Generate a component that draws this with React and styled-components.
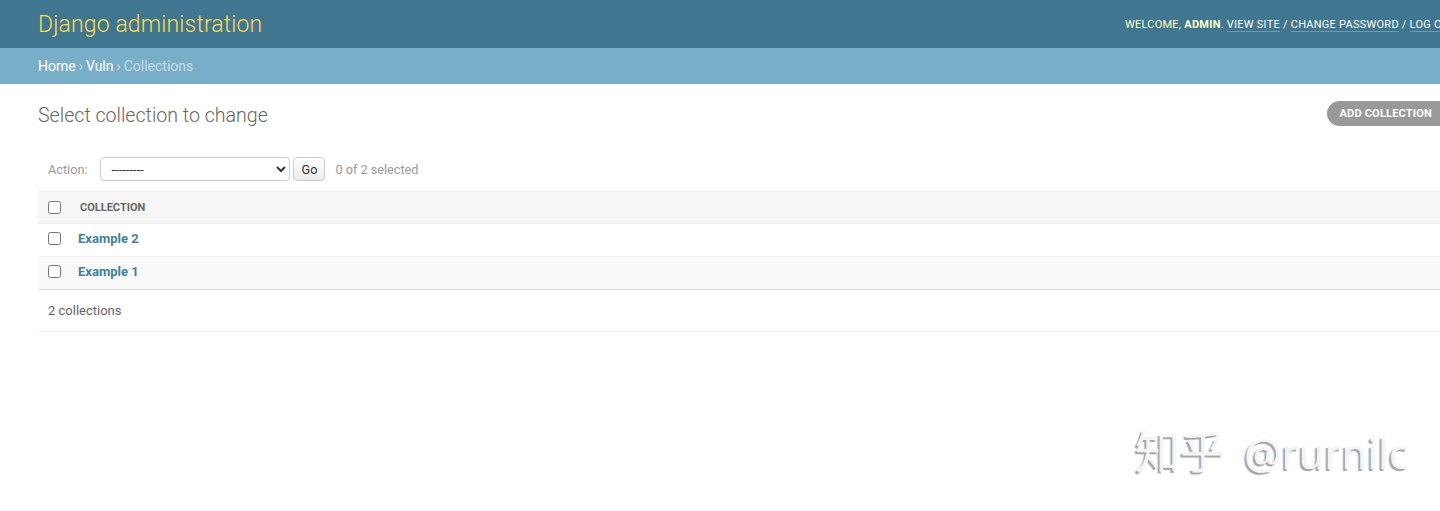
import React from "react";
import styled, { createGlobalStyle } from "styled-components";

const GlobalStyle = createGlobalStyle`
  html, body {
    margin: 0;
    padding: 0;
    background: #fff;
    overflow: hidden;
  }
  body {
    font-family: Roboto, "Lucida Grande", "DejaVu Sans", Verdana, sans-serif;
    color: #333;
    font-size: 14px;
  }
`;

// the screenshot is a crop of a wider window, so the page runs past the right edge
const Page = styled.div`
  position: relative;
  width: 1496px;
  min-height: 511px;
`;

const Header = styled.header`
  display: flex;
  align-items: center;
  justify-content: space-between;
  height: 48px;
  padding: 0 40px 0 38px;
  background: #417690;
  color: #ffc;
`;

const Branding = styled.h1`
  margin: 0;
  font-size: 23px;
  font-weight: 300;
  color: #f5dd5d;
  letter-spacing: 0.12px;
`;

const UserTools = styled.div`
  font-size: 11px;
  letter-spacing: 0.25px;
  text-transform: uppercase;
  white-space: nowrap;
  padding-top: 1px;
`;

const ToolLink = styled.a`
  color: #fff;
  text-decoration: none;
  border-bottom: 1px solid rgba(255, 255, 255, 0.25);
`;

const Breadcrumbs = styled.nav`
  height: 36px;
  display: flex;
  align-items: center;
  padding: 0 38px;
  background: #79aec8;
  color: #c4dce8;
  font-size: 14px;
`;

const Crumb = styled.a`
  color: #fff;
  text-decoration: none;
`;

const Sep = styled.span`
  margin: 0 3px;
`;

const Content = styled.main`
  padding: 17px 38px 0 38px;
`;

const TitleRow = styled.div`
  display: flex;
  justify-content: space-between;
  align-items: flex-start;
  height: 46px;
`;

const Title = styled.h1`
  margin: 3px 0 0;
  font-size: 19.6px;
  font-weight: 300;
  color: #666;
`;

const AddLink = styled.a`
  display: flex;
  align-items: center;
  height: 25px;
  padding: 0 26px 0 12px;
  border-radius: 15px;
  background: #999;
  color: #fff;
  font-size: 11px;
  font-weight: 700;
  letter-spacing: 0.2px;
  text-transform: uppercase;
  text-decoration: none;
`;

const Actions = styled.div`
  display: flex;
  align-items: center;
  height: 24px;
  padding: 10px;
  color: #999;
  font-size: 12.7px;
`;

const Label = styled.span`
  margin-right: 13px;
`;

const Select = styled.select`
  width: 190px;
  height: 24px;
  padding: 0 4px 0 6px;
  border: 1px solid #ccc;
  border-radius: 4px;
  background: #fff;
  color: #333;
  font-family: Roboto, sans-serif;
  font-size: 13px;
`;

const GoButton = styled.button`
  height: 24px;
  margin-left: 3px;
  padding: 0 7px;
  border: 1px solid #ccc;
  border-radius: 4px;
  background: linear-gradient(#fff, #ececec);
  color: #333;
  font-family: Roboto, sans-serif;
  font-size: 12.7px;
`;

const Counter = styled.span`
  margin-left: 10px;
`;

const Table = styled.table`
  width: 100%;
  border-collapse: collapse;
  font-size: 13px;
`;

const HeadCell = styled.th`
  height: 30px;
  padding: ${({ $check }) => ($check ? "0 0 1px 10px" : "0 10px 1px")};
  width: ${({ $check }) => ($check ? "22px" : "auto")};
  background: #f6f6f6;
  border-top: 1px solid #eee;
  border-bottom: 1px solid #eee;
  color: #666;
  font-size: 11px;
  font-weight: 700;
  text-align: left;
  text-transform: uppercase;
  vertical-align: middle;
`;

const Row = styled.tr`
  background: ${({ $alt }) => ($alt ? "#f9f9f9" : "#fff")};
`;

const Cell = styled.td`
  height: 29px;
  padding: ${({ $check }) => ($check ? "0 0 3px 10px" : "0 8px 3px")};
  border-bottom: ${({ $last }) => ($last ? "none" : "1px solid #eee")};
  vertical-align: middle;
`;

const Check = styled.input.attrs({ type: "checkbox" })`
  display: block;
  width: 13px;
  height: 13px;
  margin: 0;
`;

const ItemLink = styled.a`
  color: #447e9b;
  font-weight: 700;
  text-decoration: none;
`;

const Paginator = styled.p`
  margin: 0;
  padding: 10px;
  line-height: 21px;
  font-size: 13px;
  color: #666;
  border-top: 1px solid #ddd;
  border-bottom: 1px solid #eee;
`;

const Watermark = styled.div`
  position: absolute;
  left: 1135px;
  top: 417px;
  display: flex;
  align-items: baseline;
  color: #f5f5f5;
  text-shadow: -2px 2px 1px #a4a4a4;
  white-space: nowrap;
  pointer-events: none;
`;

const MarkCjk = styled.span`
  font-family: "Noto Sans CJK SC", sans-serif;
  font-size: 45px;
  font-weight: 400;
`;

const MarkLatin = styled.span`
  margin-left: 19px;
  font-family: "Noto Sans", "Open Sans", sans-serif;
  font-size: 41.6px;
  font-weight: 400;
`;

const rows = ["Example 2", "Example 1"];

export default function App() {
  return (
    <Page>
      <GlobalStyle />
      <Header>
        <Branding>Django administration</Branding>
        <UserTools>
          Welcome, <strong>admin</strong>. <ToolLink href="#">View site</ToolLink> /{" "}
          <ToolLink href="#">Change password</ToolLink> / <ToolLink href="#">Log out</ToolLink>
        </UserTools>
      </Header>
      <Breadcrumbs>
        <Crumb href="#">Home</Crumb>
        <Sep>›</Sep>
        <Crumb href="#">Vuln</Crumb>
        <Sep>›</Sep>
        Collections
      </Breadcrumbs>
      <Content>
        <TitleRow>
          <Title>Select collection to change</Title>
          <AddLink href="#">Add collection</AddLink>
        </TitleRow>
        <Actions>
          <Label>Action:</Label>
          <Select defaultValue="">
            <option value="">---------</option>
            <option value="delete">Delete selected collections</option>
          </Select>
          <GoButton type="button">Go</GoButton>
          <Counter>0 of 2 selected</Counter>
        </Actions>
        <Table>
          <thead>
            <tr>
              <HeadCell $check>
                <Check />
              </HeadCell>
              <HeadCell>Collection</HeadCell>
            </tr>
          </thead>
          <tbody>
            {rows.map((name, i) => (
              <Row key={name} $alt={i % 2 === 1}>
                <Cell $check $last={i === rows.length - 1}>
                  <Check />
                </Cell>
                <Cell $last={i === rows.length - 1}>
                  <ItemLink href="#">{name}</ItemLink>
                </Cell>
              </Row>
            ))}
          </tbody>
        </Table>
        <Paginator>2 collections</Paginator>
      </Content>
      <Watermark>
        <MarkCjk>知乎</MarkCjk>
        <MarkLatin>@rurnilc</MarkLatin>
      </Watermark>
    </Page>
  );
}
